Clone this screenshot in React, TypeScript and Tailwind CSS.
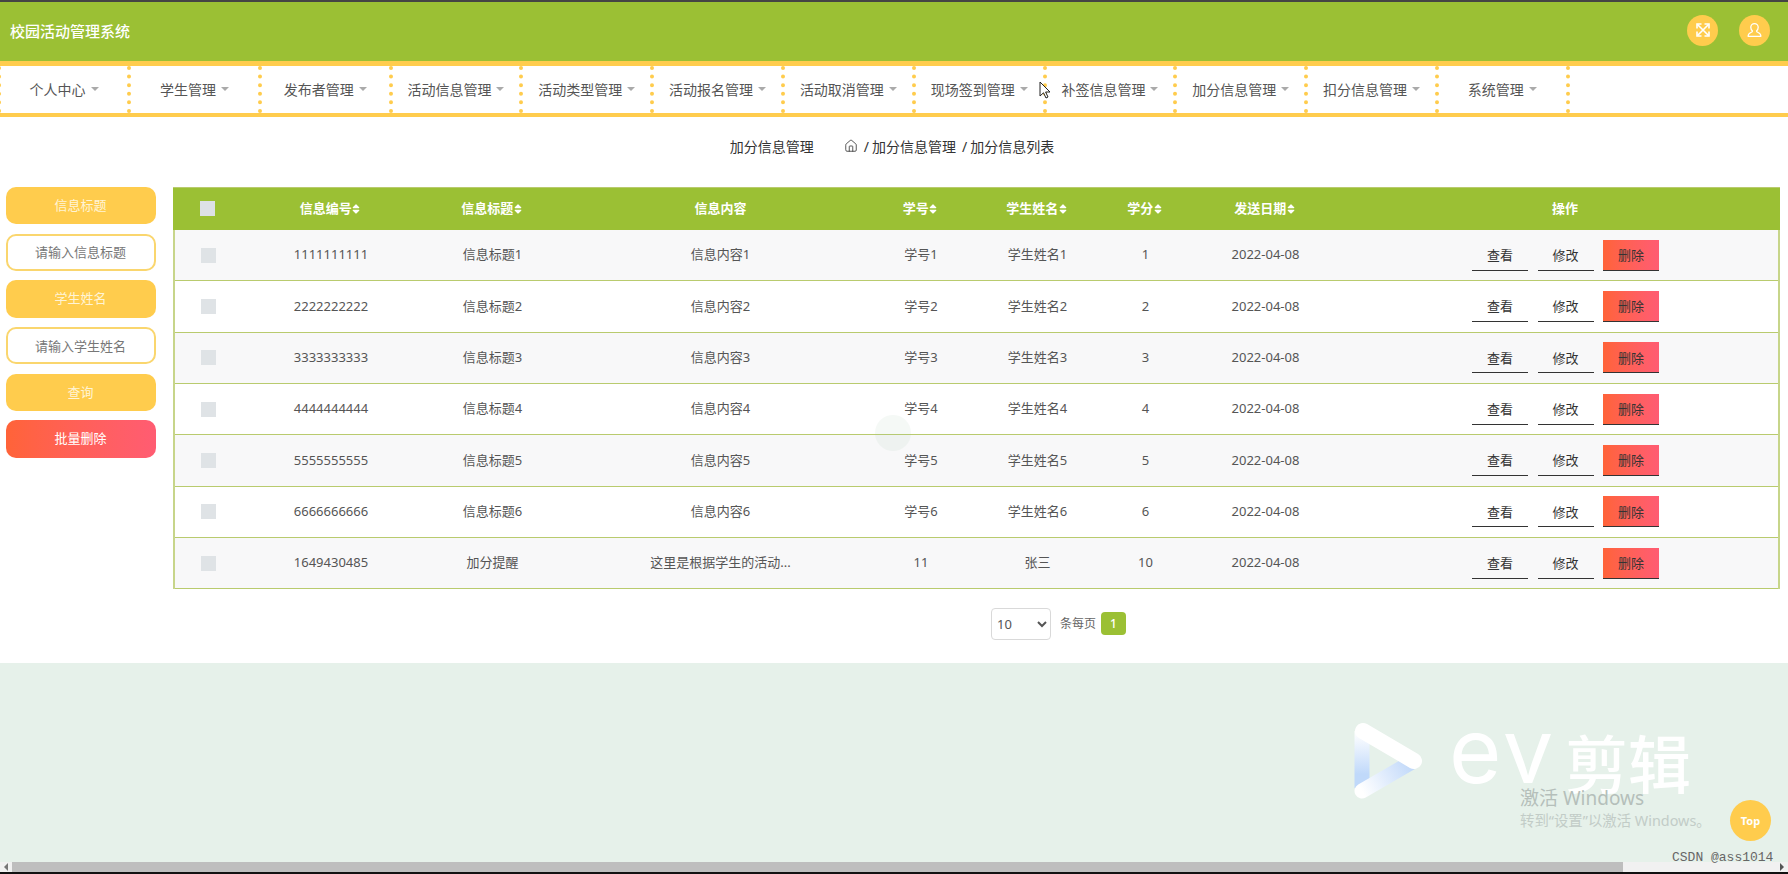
import { House } from 'lucide-react';
import { FaSort } from 'react-icons/fa';

const FONT = { fontFamily: '"Noto Sans", "Noto Sans CJK SC", sans-serif' };

const menus = [
    '个人中心', '学生管理', '发布者管理', '活动信息管理', '活动类型管理', '活动报名管理',
    '活动取消管理', '现场签到管理', '补签信息管理', '加分信息管理', '扣分信息管理', '系统管理',
];

const rows = [
    ['1111111111', '信息标题1', '信息内容1', '学号1', '学生姓名1', '1'],
    ['2222222222', '信息标题2', '信息内容2', '学号2', '学生姓名2', '2'],
    ['3333333333', '信息标题3', '信息内容3', '学号3', '学生姓名3', '3'],
    ['4444444444', '信息标题4', '信息内容4', '学号4', '学生姓名4', '4'],
    ['5555555555', '信息标题5', '信息内容5', '学号5', '学生姓名5', '5'],
    ['6666666666', '信息标题6', '信息内容6', '学号6', '学生姓名6', '6'],
    ['1649430485', '加分提醒', '这里是根据学生的活动...', '11', '张三', '10'],
];

// the body sits inside a 2px side border, so its first column is 2px narrower
const headCols = 'grid grid-cols-[68px_180px_143px_313px_88px_145px_71px_169px_1fr] items-center text-center';
const rowCols = 'grid grid-cols-[66px_180px_143px_313px_88px_145px_71px_169px_1fr] items-center text-center';

function SortHead({ label }: { label: string }) {
    return (
        <div className="flex items-center justify-center">
            {label}
            <FaSort size={12} className="-ml-[1.5px]" />
        </div>
    );
}

function SideButton({ label }: { label: string }) {
    return (
        <button className="h-[37.3px] w-full rounded-[10px] bg-[#ffcc4d] text-[13px] text-[#fff4d6]">{label}</button>
    );
}

function SideInput({ placeholder }: { placeholder: string }) {
    return (
        <input
            placeholder={placeholder}
            className="h-[37.3px] w-full rounded-[10px] border-2 border-[#fad66e] bg-white text-center text-[13px] outline-none placeholder:text-[#777]"
        />
    );
}

export default function App() {
    return (
        <div style={FONT} className="relative flex h-[874px] w-[1788px] flex-col overflow-hidden bg-white">
            {/* top bar */}
            <header className="flex h-[61px] flex-shrink-0 items-center justify-between border-t-2 border-[#444] bg-[#9bc034] pl-[10px] pr-[18px]">
                <div className="text-[15px] font-medium text-white">校园活动管理系统</div>
                <div className="mb-[3px] flex items-center gap-[21px]">
                    <div className="flex h-[31px] w-[31px] items-center justify-center rounded-full bg-[#ffcc4d]">
                        <svg viewBox="0 0 16 16" className="h-[16px] w-[16px]" fill="none" stroke="#fff" strokeWidth="1.6">
                            <path d="M2.5 2.5L13.5 13.5M13.5 2.5L2.5 13.5" />
                            <path d="M2 6.5V2H6.5M9.5 2H14V6.5M14 9.5V14H9.5M6.5 14H2V9.5" />
                        </svg>
                    </div>
                    <div className="flex h-[31px] w-[31px] items-center justify-center rounded-full bg-[#ffcc4d]">
                        <svg viewBox="0 0 16 16" className="h-[17px] w-[17px]" fill="none" stroke="#fff" strokeWidth="1.2" strokeLinejoin="round">
                            <path d="M8 1.5a3.5 3.5 0 0 1 3.5 3.5c0 1.6-.8 2.8-1.6 3.4 0 .8.4 1.1 1.5 1.5 1.6.6 2.6 1.3 2.6 3.6H2c0-2.3 1-3 2.6-3.6 1.1-.4 1.5-.7 1.5-1.5-.8-.6-1.6-1.8-1.6-3.4A3.5 3.5 0 0 1 8 1.5z" />
                        </svg>
                    </div>
                </div>
            </header>

            {/* menu */}
            <nav className="flex h-[56px] flex-shrink-0 border-b-4 border-t-[5px] border-[#ffcc4d] bg-white">
                <div className="-ml-[3px] flex">
                    {menus.map((m, i) => (
                        <div
                            key={m}
                            className={`flex h-[47px] items-center justify-center gap-[5px] border-l-4 border-dotted border-[#ffcc4d] text-[14px] text-[#555] ${i === 0 ? 'w-[130px]' : i === menus.length - 1 ? 'w-[134.8px] border-r-4' : 'w-[130.8px]'}`}
                        >
                            {m}
                            <span className="mt-[-2px] h-0 w-0 border-x-[4px] border-t-[4px] border-x-transparent border-t-[#aaa]" />
                        </div>
                    ))}
                </div>
            </nav>

            <main className="flex-shrink-0">
                {/* breadcrumb */}
                <div className="flex h-[61px] items-center justify-center pb-[3px] pr-[4px] text-[14px] text-[#333]">
                    <span>加分信息管理</span>
                    <House size={14} strokeWidth={1.4} className="ml-[30px]" />
                    <span className="ml-[6px]">/</span>
                    <span className="ml-[3px]">加分信息管理</span>
                    <span className="ml-[6px]">/</span>
                    <span className="ml-[3px]">加分信息列表</span>
                </div>

                <div className="mt-[9px] flex pl-[5.5px]">
                    <aside className="flex w-[150px] flex-col gap-[9.4px]">
                        <SideButton label="信息标题" />
                        <SideInput placeholder="请输入信息标题" />
                        <SideButton label="学生姓名" />
                        <SideInput placeholder="请输入学生姓名" />
                        <SideButton label="查询" />
                        <button className="h-[37.3px] w-full rounded-[10px] bg-gradient-to-r from-[#ff6338] to-[#ff5c72] text-[13px] text-white">
                            批量删除
                        </button>
                    </aside>

                    <div className="ml-[17.5px] w-[1607px]">
                        <div className={`${headCols} h-[43px] border-t border-[#b9cb6e] bg-[#9bc034] pb-[1px] text-[13px] font-bold text-white`}>
                            <div className="flex justify-center">
                                <span className="h-[15px] w-[15px] bg-[#dde1e6]" />
                            </div>
                            <SortHead label="信息编号" />
                            <SortHead label="信息标题" />
                            <div>信息内容</div>
                            <SortHead label="学号" />
                            <SortHead label="学生姓名" />
                            <SortHead label="学分" />
                            <SortHead label="发送日期" />
                            <div>操作</div>
                        </div>
                        <div className="border-x-2 border-[#c7d58a]">
                            {rows.map((r, i) => (
                                <div
                                    key={r[0]}
                                    className={`${rowCols} h-[51.33px] border-b-[1.5px] border-[#b9cb6e] text-[13px] text-[#555] ${i % 2 === 0 ? 'bg-[#f8f8f9]' : 'bg-white'}`}
                                >
                                    <div className="flex justify-center">
                                        <span className="h-[15px] w-[15px] bg-[#dfe3e6]" />
                                    </div>
                                    {r.map((c, j) => (
                                        <div key={j}>{c}</div>
                                    ))}
                                    <div>2022-04-08</div>
                                    <div className="flex justify-center gap-[9.4px] pl-[3px]">
                                        <button className="h-[31px] w-[56px] border-b border-[#333] pt-[2px] text-[13px] text-[#333]">查看</button>
                                        <button className="h-[31px] w-[56px] border-b border-[#333] pt-[2px] text-[13px] text-[#333]">修改</button>
                                        <button className="h-[31px] w-[56px] border-b border-[#333] bg-gradient-to-r from-[#ff6338] to-[#ff5c72] pt-[2px] text-[13px] text-[#333]">删除</button>
                                    </div>
                                </div>
                            ))}
                        </div>

                        <div className="ml-[818px] mt-[19px] flex h-[55px] items-start text-[12px] text-[#666]">
                            <select className="h-[32px] w-[60px] rounded-[4px] border border-[#d9d9d9] bg-white pl-[1px] text-[13px] text-[#555]">
                                <option>10</option>
                            </select>
                            <span className="ml-[9px] mt-[7px]">条每页</span>
                            <span className="ml-[5px] mt-[4px] flex h-[23px] w-[25px] items-center justify-center rounded-[4px] bg-[#9bc034] text-[12px] font-medium text-white">
                                1
                            </span>
                        </div>
                    </div>
                </div>
            </main>

            <footer className="relative flex-1 bg-[#e6f1ea]">
                {/* video watermark */}
                <svg viewBox="0 0 68 78" className="absolute left-[1354px] top-[59px] h-[78px] w-[68px]">
                    <defs>
                        <linearGradient id="lg1" gradientUnits="userSpaceOnUse" x1="8" y1="10" x2="8" y2="66">
                            <stop offset="0" stopColor="#ffffff" />
                            <stop offset="0.75" stopColor="#c0d9fa" />
                        </linearGradient>
                        <linearGradient id="lg2" gradientUnits="userSpaceOnUse" x1="8" y1="69" x2="59" y2="39">
                            <stop offset="0" stopColor="#ffffff" />
                            <stop offset="1" stopColor="#bdd6f9" />
                        </linearGradient>
                    </defs>
                    <path d="M8 9V66" stroke="url(#lg1)" strokeWidth="15" fill="none" />
                    <path d="M8 69L58 40" stroke="url(#lg2)" strokeWidth="15" strokeLinecap="round" fill="none" />
                    <path d="M9 9L60 39" stroke="#fff" strokeWidth="16" strokeLinecap="round" fill="none" />
                </svg>
                <div className="absolute left-[1449px] top-[58px] font-['Inter'] text-[90px] font-normal leading-[60px] tracking-[3px] text-white">ev</div>
                <div className="absolute left-[1565px] top-[76px] text-[63px] font-medium leading-[50px] text-white">剪辑</div>
                <div className="absolute left-[1520px] top-[125px] text-[19px] leading-[20px] text-[#b5bfba]">激活 Windows</div>
                <div className="absolute left-[1520px] top-[148px] text-[14.4px] leading-[20px] text-[#c2ccc7]">转到“设置”以激活 Windows。</div>
                <div className="absolute left-[1730px] top-[137px] flex h-[41px] w-[41px] items-center justify-center rounded-full bg-[#ffcc4d] text-[11px] font-bold text-white">
                    Top
                </div>
                <div className="absolute left-[1672px] top-[187px] font-['Liberation_Mono'] text-[13px] leading-[16px] text-[#666]">CSDN @ass1014</div>
            </footer>

            {/* horizontal scrollbar */}
            <div className="flex h-[12px] flex-shrink-0 border-b-2 border-[#111] bg-[#f1f1f1]">
                <div className="flex w-[12px] items-center justify-center">
                    <span className="h-0 w-0 border-y-[4px] border-r-[4px] border-y-transparent border-r-[#777]" />
                </div>
                <div className="w-[1611px] bg-[#bebebe]" />
                <div className="flex-1" />
                <div className="flex w-[12px] items-center justify-center">
                    <span className="h-0 w-0 border-y-[4px] border-l-[4px] border-y-transparent border-l-[#555]" />
                </div>
            </div>

            {/* click ripple and mouse cursor over the page */}
            <div className="absolute left-[875px] top-[415px] h-[36px] w-[36px] rounded-full bg-[#9bc9a8]/10" />
            <svg viewBox="0 0 12 18" className="absolute left-[1039px] top-[81px] h-[18px] w-[12px]">
                <path d="M1 1V15L4.5 11.8L7 17L9 16L6.6 11H11Z" fill="#fff" stroke="#222" strokeWidth="1" strokeLinejoin="round" />
            </svg>
        </div>
    );
}
